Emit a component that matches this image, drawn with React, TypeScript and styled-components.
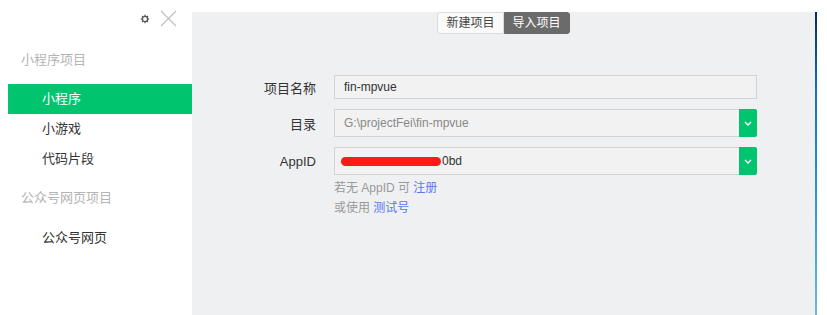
import styled, { createGlobalStyle } from "styled-components";

const GlobalStyle = createGlobalStyle`
  html, body {
    margin: 0;
    padding: 0;
    background: #fff;
    overflow: hidden;
  }
  body {
    font-family: "Liberation Sans", "Noto Sans CJK SC", sans-serif;
    font-size: 13px;
    color: #333;
  }
`;

const GREEN = "#00c56e";

const Gear = () => (
  <svg width="10" height="10" viewBox="0 0 10 10">
    <g stroke="#555" strokeWidth="1.2">
      <line x1="5" y1="0.8" x2="5" y2="2.4" />
      <line x1="5" y1="7.6" x2="5" y2="9.2" />
      <line x1="0.8" y1="5" x2="2.4" y2="5" />
      <line x1="7.6" y1="5" x2="9.2" y2="5" />
      <line x1="2" y1="2" x2="3" y2="3" />
      <line x1="8" y1="2" x2="7" y2="3" />
      <line x1="2" y1="8" x2="3" y2="7" />
      <line x1="8" y1="8" x2="7" y2="7" />
    </g>
    <circle cx="5" cy="5" r="2.6" fill="none" stroke="#555" strokeWidth="1.3" />
  </svg>
);

const Close = () => (
  <svg width="17" height="17" viewBox="0 0 17 17">
    <path d="M1 1 L16 16 M16 1 L1 16" stroke="#bdbdbd" strokeWidth="1.1" fill="none" />
  </svg>
);

const Chevron = () => (
  <svg width="8" height="5" viewBox="0 0 8 5">
    <path d="M1 1 L4 4 L7 1" stroke="#fff" strokeWidth="1.4" fill="none" />
  </svg>
);

const App = () => {
  return (
    <>
      <GlobalStyle />
      <Window>
        <Sidebar>
          <SideHeader>
            <Gear />
            <Close />
          </SideHeader>
          <GroupLabel>小程序项目</GroupLabel>
          <NavItem $active>小程序</NavItem>
          <NavItem>小游戏</NavItem>
          <NavItem>代码片段</NavItem>
          <GroupLabel $second>公众号网页项目</GroupLabel>
          <NavItem $spaced>公众号网页</NavItem>
        </Sidebar>
        <MainArea>
          <Panel>
            <Tabs>
              <Tab>新建项目</Tab>
              <Tab $active>导入项目</Tab>
            </Tabs>
            <Form>
              <Label>项目名称</Label>
              <Input>fin-mpvue</Input>
              <Label>目录</Label>
              <Select>
                <SelectValue $muted>G:\projectFei\fin-mpvue</SelectValue>
                <DropButton>
                  <Chevron />
                </DropButton>
              </Select>
              <Label>AppID</Label>
              <Select>
                <SelectValue>
                  <Redacted />
                  0bd
                </SelectValue>
                <DropButton>
                  <Chevron />
                </DropButton>
              </Select>
              <span />
              <Hints>
                <div>
                  若无 AppID 可 <HintLink>注册</HintLink>
                </div>
                <div>
                  或使用 <HintLink>测试号</HintLink>
                </div>
              </Hints>
            </Form>
          </Panel>
          <DesktopEdge />
          <Outside />
        </MainArea>
      </Window>
    </>
  );
};

const Window = styled.div`
  display: flex;
  width: 827px;
  height: 315px;
`;

const Sidebar = styled.div`
  width: 192px;
  flex-shrink: 0;
  background: #fff;
  display: flex;
  flex-direction: column;
`;

const SideHeader = styled.div`
  height: 40px;
  display: flex;
  align-items: flex-start;
  justify-content: flex-end;
  gap: 10px;
  padding: 10px 15px 0 0;
  box-sizing: border-box;

  svg:first-child {
    margin-top: 4px;
  }
`;

const GroupLabel = styled.div<{ $second?: boolean }>`
  padding-left: 21px;
  line-height: 20px;
  color: #b4b4b4;
  font-size: 13px;
  margin-top: ${(p) => (p.$second ? "14px" : "10px")};
  margin-bottom: ${(p) => (p.$second ? "0" : "14px")};
`;

const NavItem = styled.div<{ $active?: boolean; $spaced?: boolean }>`
  height: 30px;
  line-height: 30px;
  margin-left: 8px;
  padding-left: 34px;
  font-size: 13px;
  color: ${(p) => (p.$active ? "#fff" : "#333")};
  background: ${(p) => (p.$active ? GREEN : "transparent")};
  margin-top: ${(p) => (p.$spaced ? "15px" : "0")};
`;

const MainArea = styled.div`
  flex: 1;
  display: flex;
  padding-top: 12px;
`;

const Panel = styled.div`
  flex: 1;
  background: #eff0f2;
  display: flex;
  flex-direction: column;
  align-items: stretch;
`;

const DesktopEdge = styled.div`
  width: 2px;
  background: linear-gradient(#0a2a50 0%, #0d6fc8 25%, #1f8fe0 55%, #6ab8e6 100%);
`;

const Outside = styled.div`
  width: 10px;
  background: #fff;
`;

const Tabs = styled.div`
  display: flex;
  justify-content: center;
`;

const Tab = styled.div<{ $active?: boolean }>`
  height: 22px;
  line-height: 20px;
  padding: 0 8px;
  font-size: 12px;
  box-sizing: border-box;
  border: 1px solid ${(p) => (p.$active ? "#6b6b6b" : "#dcdcdc")};
  background: ${(p) => (p.$active ? "#6b6b6b" : "#fafafa")};
  color: ${(p) => (p.$active ? "#fff" : "#444")};
  border-radius: ${(p) => (p.$active ? "0 3px 3px 0" : "3px 0 0 3px")};
`;

const Form = styled.div`
  display: grid;
  grid-template-columns: 100px 423px;
  column-gap: 18px;
  row-gap: 10px;
  align-items: center;
  margin: 41px 0 0 24px;
`;

const Label = styled.div`
  text-align: right;
  font-size: 13px;
  color: #333;
`;

const Input = styled.div`
  height: 24px;
  line-height: 22px;
  box-sizing: border-box;
  border: 1px solid #d3d3d3;
  background: #f2f2f3;
  padding-left: 9px;
  font-size: 12px;
  color: #333;
`;

const Select = styled.div`
  height: 28px;
  display: flex;
  box-sizing: border-box;
`;

const SelectValue = styled.div<{ $muted?: boolean }>`
  flex: 1;
  display: flex;
  align-items: center;
  border: 1px solid #d3d3d3;
  border-right: none;
  background: #f2f2f3;
  padding-left: 9px;
  font-size: 12px;
  color: ${(p) => (p.$muted ? "#888" : "#333")};
`;

const Redacted = styled.span`
  display: inline-block;
  width: 100px;
  height: 9px;
  border-radius: 5px;
  background: #ff1a1a;
  margin-left: -3px;
  margin-right: 1px;
`;

const DropButton = styled.div`
  width: 18px;
  background: ${GREEN};
  border-radius: 0 2px 2px 0;
  display: flex;
  align-items: center;
  justify-content: center;
`;

const Hints = styled.div`
  margin-top: -7px;
  font-size: 12px;
  line-height: 20px;
  color: #999;
`;

const HintLink = styled.span`
  color: #5a78f0;
`;

export default App;
